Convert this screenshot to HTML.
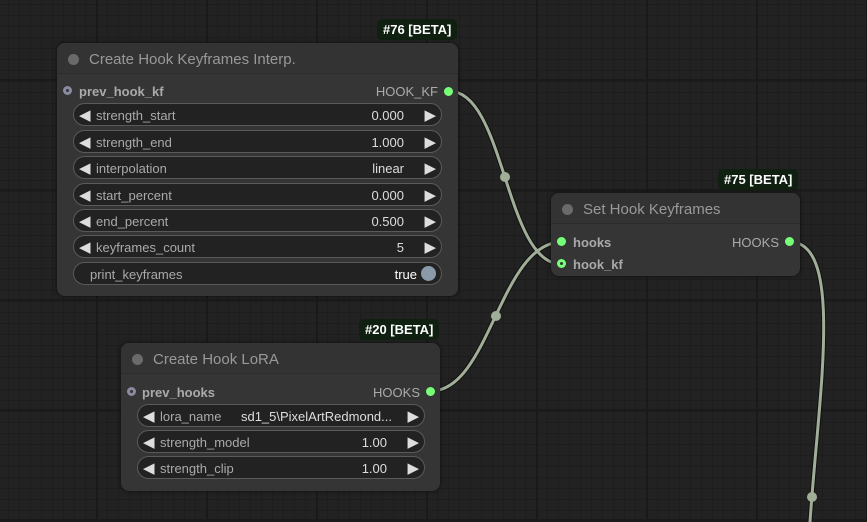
<!DOCTYPE html>
<html><head><meta charset="utf-8"><style>
*{margin:0;padding:0;box-sizing:border-box}
body{width:867px;height:522px;overflow:hidden;background:#222;font-family:"Liberation Sans",Arial,sans-serif;position:relative}
.grid{position:absolute;inset:0;
background-image:
linear-gradient(90deg,#1a1a1a 2px,transparent 2px),
linear-gradient(0deg,#1a1a1a 2px,transparent 2px),
linear-gradient(90deg,#1d1d1d 1px,transparent 1px),
linear-gradient(0deg,#1d1d1d 1px,transparent 1px);
background-size:110px 110px,110px 110px,11px 11px,11px 11px;
background-position:96px 0,0 81px,8px 0,0 5px}
svg{position:absolute;left:0;top:0}
.node{position:absolute;background:#353535;border-radius:8px;box-shadow:0 0 4px rgba(0,0,0,.6)}
.title{position:absolute;left:0;right:0;top:0;height:31px;border-bottom:1px solid #2c2c2c;background:#333;border-radius:8px 8px 0 0}
.title .dot{position:absolute;left:11px;top:11px;width:11px;height:11px;border-radius:50%;background:#6a6a6a}
.title span{position:absolute;left:32px;top:8px;font-size:15px;color:#999}
.badge{position:absolute;background:#0f1f10;color:#fff;font-size:13px;font-weight:bold;padding:3px 6px;border-radius:5px;height:21px;line-height:15px}
.slot{position:absolute;font-size:13px;color:#aaa;font-weight:bold}
.out{position:absolute;font-size:13px;color:#aaa}
.g{position:absolute;width:9px;height:9px;border-radius:50%;background:#7f7;}
.gi{position:absolute;width:9px;height:9px;border-radius:50%;background:#7f7}
.gi::after{content:"";position:absolute;left:3px;top:3px;width:3px;height:3px;border-radius:50%;background:#353535}
.e{position:absolute;width:9px;height:9px;border-radius:50%;background:#8a8aa0}
.e::after{content:"";position:absolute;left:3px;top:3px;width:3px;height:3px;border-radius:50%;background:#353535}
.w{position:absolute;height:23px;border:1px solid #5a5a5a;background:#222;border-radius:12px;font-size:13px;color:#aaa}
.w .l{position:absolute;left:5px;top:2px;color:#ddd;font-size:15px}
.w .n{position:absolute;left:22px;top:4px}
.w .v{position:absolute;right:37px;top:4px;color:#ddd}
.w .r{position:absolute;right:5px;top:2px;color:#ddd;font-size:15px}
</style></head><body>
<div class="grid"></div>
<svg width="867" height="522">
<g fill="none" stroke-linecap="round">
<path d="M449 91 C505 91 505 264 561 264" stroke="#111" stroke-width="5"/>
<path d="M431 391 C490 391 500 242 562 242" stroke="#111" stroke-width="5"/>
<path d="M790 242 C845 242 818 400 810 522" stroke="#111" stroke-width="5"/>
<path d="M449 91 C505 91 505 264 561 264" stroke="#a0ae98" stroke-width="3"/>
<path d="M431 391 C490 391 500 242 562 242" stroke="#a0ae98" stroke-width="3"/>
<path d="M790 242 C845 242 818 400 810 522" stroke="#a0ae98" stroke-width="3"/>
</g>
<circle cx="505" cy="177" r="5" fill="#a0ae98"/>
<circle cx="496" cy="316" r="5" fill="#a0ae98"/>
<circle cx="812" cy="497" r="5" fill="#a0ae98"/>
</svg>

<div class="badge" style="left:377px;top:19px">#76 [BETA]</div>
<div class="node" style="left:57px;top:43px;width:401px;height:253px">
<div class="title"><div class="dot"></div><span>Create Hook Keyframes Interp.</span></div>
<div class="e" style="left:6px;top:43px"></div><div class="slot" style="left:22px;top:41px">prev_hook_kf</div>
<div class="out" style="right:20px;top:41px">HOOK_KF</div><div class="g" style="right:5px;top:44px"></div>
<div class="w" style="left:16px;top:60px;width:369px"><span class="l">◀</span><span class="n">strength_start</span><span class="v">0.000</span><span class="r">▶</span></div>
<div class="w" style="left:16px;top:87px;width:369px"><span class="l">◀</span><span class="n">strength_end</span><span class="v">1.000</span><span class="r">▶</span></div>
<div class="w" style="left:16px;top:113px;width:369px"><span class="l">◀</span><span class="n">interpolation</span><span class="v">linear</span><span class="r">▶</span></div>
<div class="w" style="left:16px;top:140px;width:369px"><span class="l">◀</span><span class="n">start_percent</span><span class="v">0.000</span><span class="r">▶</span></div>
<div class="w" style="left:16px;top:166px;width:369px"><span class="l">◀</span><span class="n">end_percent</span><span class="v">0.500</span><span class="r">▶</span></div>
<div class="w" style="left:16px;top:192px;width:369px"><span class="l">◀</span><span class="n">keyframes_count</span><span class="v">5</span><span class="r">▶</span></div>
<div class="w" style="left:16px;top:219px;width:369px"><span class="n" style="left:16px">print_keyframes</span><span class="v" style="right:24px;color:#fff">true</span><span style="position:absolute;right:5px;top:3px;width:15px;height:15px;border-radius:50%;background:#8a9aaa"></span></div>
</div>

<div class="badge" style="left:718px;top:169px">#75 [BETA]</div>
<div class="node" style="left:551px;top:193px;width:249px;height:83px">
<div class="title"><div class="dot"></div><span>Set Hook Keyframes</span></div>
<div class="g" style="left:6px;top:44px"></div><div class="slot" style="left:22px;top:42px">hooks</div>
<div class="gi" style="left:6px;top:66px"></div><div class="slot" style="left:22px;top:64px">hook_kf</div>
<div class="out" style="right:21px;top:42px">HOOKS</div><div class="g" style="right:6px;top:44px"></div>
</div>

<div class="badge" style="left:359px;top:319px">#20 [BETA]</div>
<div class="node" style="left:121px;top:343px;width:319px;height:148px">
<div class="title"><div class="dot"></div><span>Create Hook LoRA</span></div>
<div class="e" style="left:6px;top:44px"></div><div class="slot" style="left:21px;top:42px">prev_hooks</div>
<div class="out" style="right:20px;top:42px">HOOKS</div><div class="g" style="right:5px;top:44px"></div>
<div class="w" style="left:16px;top:61px;width:288px"><span class="l">◀</span><span class="n">lora_name</span><span class="v" style="right:32px">sd1_5\PixelArtRedmond...</span><span class="r">▶</span></div>
<div class="w" style="left:16px;top:87px;width:288px"><span class="l">◀</span><span class="n">strength_model</span><span class="v">1.00</span><span class="r">▶</span></div>
<div class="w" style="left:16px;top:113px;width:288px"><span class="l">◀</span><span class="n">strength_clip</span><span class="v">1.00</span><span class="r">▶</span></div>
</div>
</body></html>
